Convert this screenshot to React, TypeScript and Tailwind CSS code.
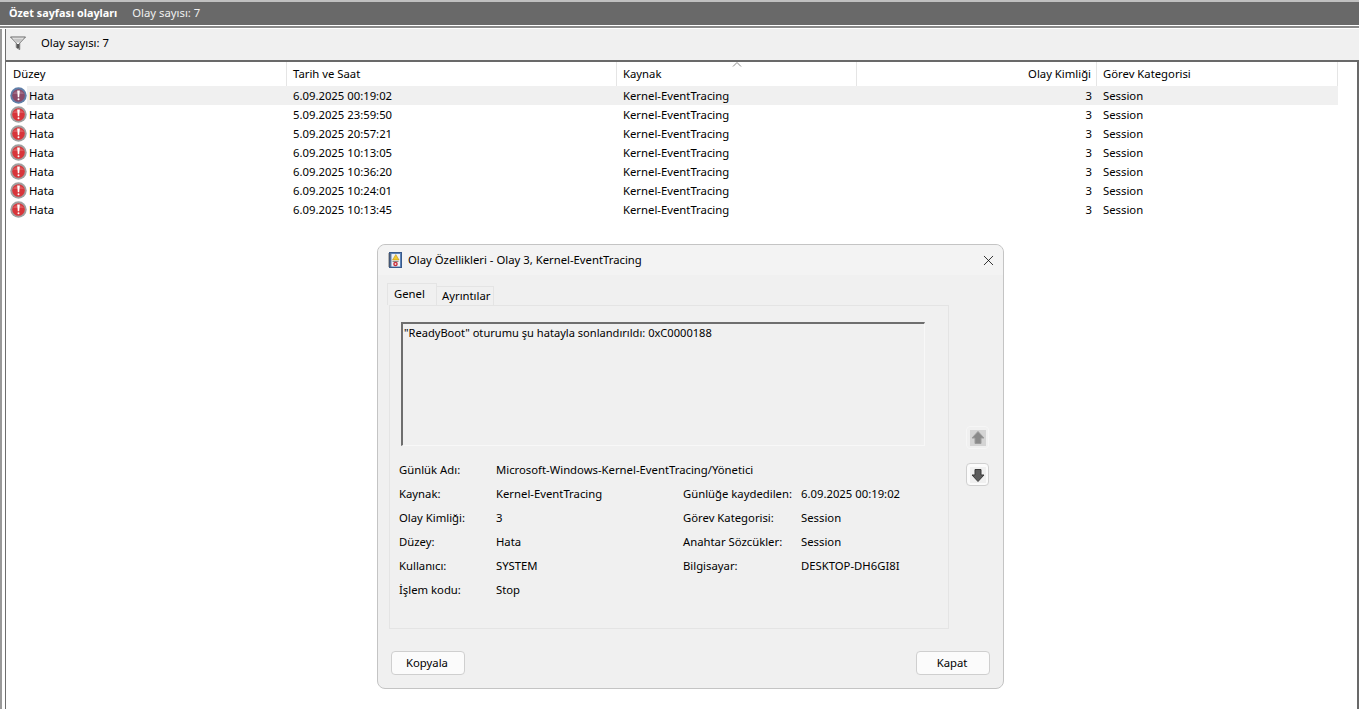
import { X } from "lucide-react";

const rows = [
  "6.09.2025 00:19:02",
  "5.09.2025 23:59:50",
  "5.09.2025 20:57:21",
  "6.09.2025 10:13:05",
  "6.09.2025 10:36:20",
  "6.09.2025 10:24:01",
  "6.09.2025 10:13:45",
];

const font = { fontFamily: '"Noto Sans", sans-serif' };

function ErrorIcon({ selected }: { selected?: boolean }) {
  const fill = selected ? "#8a4a68" : "#d8353a";
  const ring = selected ? "#5f7fa8" : "#a0a0a0";
  return (
    <svg width="17" height="17" viewBox="0 0 17 17" className="shrink-0">
      <circle cx="8.500" cy="8.500" r="8.200" fill={ring} />
      <circle cx="8.500" cy="8.500" r="6.300" fill={fill} />
      <path d="M3 7a6 5 0 0 1 11 0z" fill="#ffffff" opacity="0.18" />
      <path d="M7.200 3.500h2.600l-.6 6.800H7.800z" fill="#ffffff" />
      <rect x="7.500" y="11.300" width="2" height="2" rx="1" fill="#ffffff" />
    </svg>
  );
}

function LogIcon() {
  return (
    <svg width="16" height="16" viewBox="0 0 16 16">
      <rect x="2.500" y="0.500" width="12" height="15" fill="#5b82b8" stroke="#38598a" />
      <rect x="4.500" y="2" width="8.500" height="12.500" fill="#eef1f6" />
      <path d="M1 2h3M1 4h3M1 6h3M1 8h3M1 10h3M1 12h3M1 14h3" stroke="#555555" strokeWidth="0.800" />
      <path d="M8.800 2.500l3.300 5.500H5.500z" fill="#f4c92e" stroke="#a88612" strokeWidth="0.500" />
      <rect x="5.500" y="9" width="6" height="1" fill="#8a8a8a" />
      <circle cx="8.500" cy="12" r="2.300" fill="#c8303c" />
      <circle cx="8.500" cy="12" r="0.900" fill="#f4d8d8" />
    </svg>
  );
}

function ArrowIcon({ up }: { up?: boolean }) {
  const d = up
    ? "M8 1.500l6 6.500h-3v5.500H5V8H2z"
    : "M5 2.500h6V8h3l-6 6.500L2 8h3z";
  return (
    <svg width="16" height="16" viewBox="0 0 16 16" className={up ? "bg-[#d4d4d4]" : "bg-[#f0f0f0]"}>
      <path d={d} fill={up ? "#8a8a8a" : "#5c5c5c"} stroke={up ? "#9c9c9c" : "#3a3a3a"} />
    </svg>
  );
}

function Info({ label, value }: { label: string; value: string }) {
  return (
    <div className="flex h-6 items-center">
      <span className="w-[97px] shrink-0">{label}</span>
      <span>{value}</span>
    </div>
  );
}

function InfoRight({ label, value }: { label: string; value: string }) {
  return (
    <div className="flex h-6 items-center">
      <span className="w-[118px] shrink-0">{label}</span>
      <span>{value}</span>
    </div>
  );
}

function Dialog() {
  return (
    <div className="absolute left-[377px] top-[244px] flex h-[445px] w-[627px] flex-col rounded-lg border border-[#c4c4c4] bg-[#f0f0f0] text-[11.3px] text-black">
      <div className="flex h-[30px] items-center rounded-t-lg bg-[#f3f3f3] pl-[9px] pr-[6px]">
        <LogIcon />
        <span className="ml-[5px] flex-1">Olay Özellikleri - Olay 3, Kernel-EventTracing</span>
        <X size={17} strokeWidth={1.1} />
      </div>
      <div className="ml-[9px] mt-[8px] flex h-[22px] items-end">
        <div className="flex h-[22px] w-[50px] items-center border border-b-0 border-[#e4e4e4] bg-[#f0f0f0] pl-[6px]">
          Genel
        </div>
        <div className="flex h-[19px] w-[57px] items-center border border-b-0 border-l-0 border-[#e4e4e4] bg-[#f0f0f0] pl-[5px]">
          Ayrıntılar
        </div>
      </div>
      <div className="ml-[11px] flex h-[324px] w-[560px] flex-col border border-[#e4e4e4] pl-[9px] pt-[16px]">
        <div className="ml-[2px] h-[124px] w-[524px] border-2 border-b border-r border-[#f8f8f8] border-l-[#6e6e6e] border-t-[#6e6e6e] px-[1px] py-[1px] text-[11.100px]">
          "ReadyBoot" oturumu şu hatayla sonlandırıldı: 0xC0000188
        </div>
        <div className="mt-[12px] flex flex-col">
          <Info label="Günlük Adı:" value="Microsoft-Windows-Kernel-EventTracing/Yönetici" />
          <div className="grid grid-cols-[284px_1fr]">
            <Info label="Kaynak:" value="Kernel-EventTracing" />
            <InfoRight label="Günlüğe kaydedilen:" value="6.09.2025 00:19:02" />
            <Info label="Olay Kimliği:" value="3" />
            <InfoRight label="Görev Kategorisi:" value="Session" />
            <Info label="Düzey:" value="Hata" />
            <InfoRight label="Anahtar Sözcükler:" value="Session" />
            <Info label="Kullanıcı:" value="SYSTEM" />
            <InfoRight label="Bilgisayar:" value="DESKTOP-DH6GI8I" />
            <Info label="İşlem kodu:" value="Stop" />
          </div>
        </div>
      </div>
      <div className="absolute left-[588px] top-[181px] flex flex-col gap-[14px]">
        <div className="flex h-[23px] w-[23px] items-center justify-center rounded border border-[#f6f6f6] bg-[#f0f0f0]">
          <ArrowIcon up />
        </div>
        <div className="flex h-[23px] w-[23px] items-center justify-center rounded border border-[#d0d0d0] bg-[#fbfbfb]">
          <ArrowIcon />
        </div>
      </div>
      <div className="mt-[22px] flex justify-between pl-[13px] pr-[13px]">
        <button className="h-[24px] w-[74px] rounded border border-[#cfcfcf] bg-[#fbfbfb] pr-[2px] pt-px">Kopyala</button>
        <button className="h-[24px] w-[74px] rounded border border-[#cfcfcf] bg-[#fbfbfb] pr-[2px] pt-px">Kapat</button>
      </div>
    </div>
  );
}

export default function App() {
  return (
    <div className="relative h-[709px] w-[1359px] overflow-hidden bg-white text-[11.300px] text-black" style={font}>
      <div className="h-[2px] bg-[#c0c0c0]" />
      <div className="flex h-[23px] items-center gap-[15px] bg-[#696969] pl-[9px] text-white">
        <span className="text-[10.800px] font-bold">Özet sayfası olayları</span>
        <span className="text-[#f0f0f0]">Olay sayısı: 7</span>
      </div>
      <div className="h-[1px] bg-white" />
      <div className="h-[2px] bg-[#8a8a8a]" />
      <div className="h-[1px] bg-white" />
      <div className="flex h-[680px]">
        <div className="w-[2px] bg-[#9a9a9a]" />
        <div className="w-[3px] bg-white" />
        <div className="w-[1px] bg-[#6e6e6e]" />
        <div className="flex flex-1 flex-col">
          <div className="flex h-[31px] items-center gap-[15px] bg-[#f0f0f0] pl-[4px] pb-[2px]">
            <svg width="16" height="14" viewBox="0 0 16 14" className="mb-[2px]">
              <path d="M.500 1h15L9.700 7v6.500l-3.400-2V7z" fill="#f6f6f6" stroke="#666666" />
              <path d="M3 2.500h10L9 6.500H7z" fill="#c4c4c4" />
              <path d="M7 8h2v4H7z" fill="#555555" />
            </svg>
            <span>Olay sayısı: 7</span>
          </div>
          <div className="flex-1 border-r-2 border-t-2 border-[#696969] pl-px">
            <div className="relative grid h-6 w-[1331px] grid-cols-[280px_330px_240px_240px_241px] items-center">
              <div className="flex h-full items-center border-r border-[#e5e5e5] pl-[6px]">Düzey</div>
              <div className="flex h-full items-center border-r border-[#e5e5e5] pl-[6px]">Tarih ve Saat</div>
              <div className="flex h-full items-center border-r border-[#e5e5e5] pl-[6px]">Kaynak</div>
              <div className="flex h-full items-center justify-end border-r border-[#e5e5e5] pr-[5px]">Olay Kimliği</div>
              <div className="flex h-full items-center border-r border-[#e5e5e5] pl-[6px]">Görev Kategorisi</div>
              <svg width="10" height="5" viewBox="0 0 10 5" className="absolute left-[725px] top-0">
                <path d="M1 4.500l4-4 4 4" fill="none" stroke="#8a8a8a" />
              </svg>
            </div>
            {rows.map((date, i) => (
              <div key={date} className="relative grid h-[19px] w-[1331px] grid-cols-[280px_330px_240px_240px_241px] items-center">
                {i === 0 && <div className="absolute inset-y-0 left-[20px] right-0 bg-[#f0f0f0]" />}
                <div className="relative flex items-center gap-[2px] pl-[3px]">
                  <ErrorIcon selected={i === 0} />
                  <span className="pt-px">Hata</span>
                </div>
                <div className="relative pl-[6px] pt-px">{date}</div>
                <div className="relative pl-[6px] pt-px">Kernel-EventTracing</div>
                <div className="relative pr-[5px] pt-px text-right">3</div>
                <div className="relative pl-[6px] pt-px">Session</div>
              </div>
            ))}
          </div>
        </div>
      </div>
      <Dialog />
    </div>
  );
}
